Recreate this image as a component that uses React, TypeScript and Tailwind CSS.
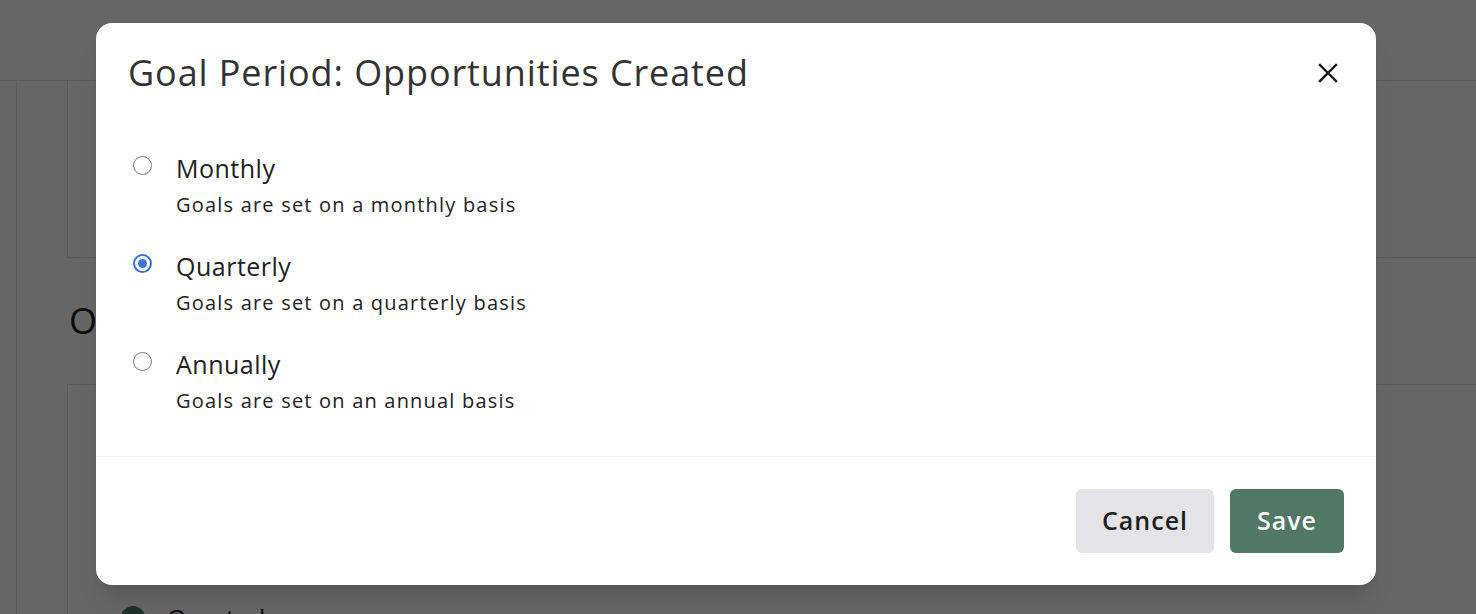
import React, { useState } from 'react';

const options = [
  { id: 'monthly', label: 'Monthly', description: 'Goals are set on a monthly basis' },
  { id: 'quarterly', label: 'Quarterly', description: 'Goals are set on a quarterly basis' },
  { id: 'annually', label: 'Annually', description: 'Goals are set on an annual basis' },
];

function Radio({ checked }: { checked: boolean }) {
  if (checked) {
    return (
      <span className="mt-[3px] flex h-[19px] w-[19px] shrink-0 items-center justify-center rounded-full border-2 border-[#3b73d9] bg-white">
        <span className="h-[9px] w-[9px] rounded-full bg-[#3b73d9]" />
      </span>
    );
  }
  return <span className="mt-[3px] h-[19px] w-[19px] shrink-0 rounded-full border-[1.5px] border-[#7b7b82] bg-white" />;
}

export default function App() {
  const [period, setPeriod] = useState('quarterly');

  return (
    <div className="relative h-[614px] w-full overflow-hidden bg-white font-['Open_Sans','Liberation_Sans',sans-serif]">
      {/* Page behind the dialog */}
      <div className="h-[81px] border-b border-[#e2e2e2]" />
      <div className="flex h-[533px]">
        <div className="w-[17px] border-r border-[#e2e2e2]" />
        <div className="flex-1 pl-[50px]">
          <div className="h-[177px] border-b border-l border-[#e2e2e2]" />
          <div className="flex h-[126px] items-center pl-[2px]">
            <span className="text-[36px] tracking-[0.025em] text-[#222]">Opportunities Created</span>
          </div>
          <div className="h-full border-l border-t border-[#e2e2e2] pl-[53px] pt-[221px]">
            <div className="flex items-center gap-[22px]">
              <span className="h-[24px] w-[24px] rounded-full bg-[#4d7a67]" />
              <span className="text-[25px] leading-[24px] text-[#222]">Quarterly</span>
            </div>
          </div>
        </div>
      </div>

      {/* Overlay */}
      <div className="absolute inset-0 bg-black/60 pl-[96px] pt-[23px]">
        <div className="w-[1280px] overflow-hidden rounded-[16px] bg-white shadow-xl">
          {/* Header */}
          <div className="flex items-center justify-between pl-[32px] pr-[38px] pt-[28px]">
            <h2 className="text-[36px] font-normal leading-[44px] tracking-[0.025em] text-[#333]">
              Goal Period: Opportunities Created
            </h2>
            <button className="flex h-[20px] w-[20px] items-center justify-center text-[#1a1a1a]">
              <svg width="20" height="20" viewBox="0 0 20 20" fill="none" stroke="currentColor" strokeWidth="2.4" strokeLinecap="square">
                <path d="M2 2 18 18M18 2 2 18" />
              </svg>
            </button>
          </div>

          {/* Body */}
          <div className="flex flex-col gap-[32px] pb-[41px] pl-[37px] pt-[58px]">
            {options.map((o) => (
              <label key={o.id} className="flex cursor-pointer gap-[24px]" onClick={() => setPeriod(o.id)}>
                <Radio checked={period === o.id} />
                <div className="flex flex-col gap-[8px]">
                  <span className="text-[25px] leading-[30px] tracking-[0.02em] text-[#222]">{o.label}</span>
                  <span className="text-[20px] leading-[28px] tracking-[0.06em] text-[#222]">{o.description}</span>
                </div>
              </label>
            ))}
          </div>

          {/* Footer */}
          <div className="flex justify-end gap-4 border-t border-[#f0f0f0] p-[32px]">
            <button className="h-[64px] w-[138px] rounded-[6px] bg-[#e4e4e7] text-[25px] font-semibold tracking-[0.04em] text-[#1f1f1f]">
              Cancel
            </button>
            <button className="h-[64px] w-[114px] rounded-[6px] bg-[#517864] text-[25px] font-semibold tracking-[0.04em] text-white">
              Save
            </button>
          </div>
        </div>
      </div>
    </div>
  );
}
